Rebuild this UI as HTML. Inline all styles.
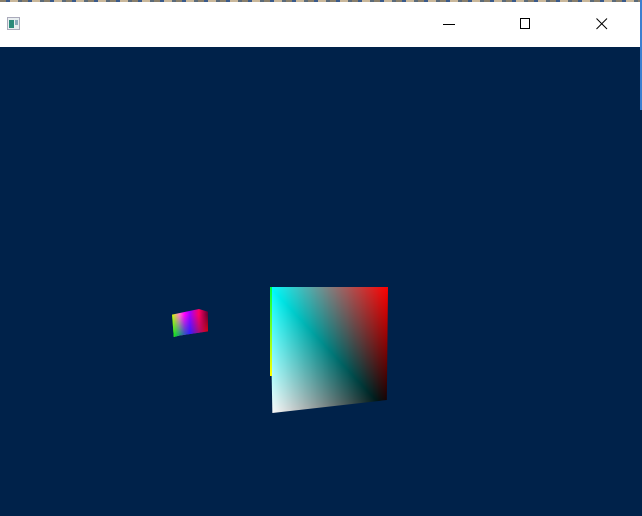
<!DOCTYPE html>
<html><head><style>
html,body{margin:0;padding:0;width:642px;height:516px;overflow:hidden;background:#00224a;font-family:"Liberation Sans",sans-serif;position:relative}
.tb{position:absolute;left:0;top:0;width:640px;height:47px;background:#fff}
.top{position:absolute;left:0;top:0;width:642px;height:2px;background:repeating-linear-gradient(90deg,#8a7f6a 0 6px,#3a5a8a 6px 10px,#c9b79a 10px 18px,#5a6a7a 18px 22px)}
.rb{position:absolute;left:640px;top:0;width:2px;height:110px;background:#3b7fd0}
.q{position:absolute;left:270px;top:287px;width:118px;height:126px;clip-path:polygon(0 0,100% 0,99% 89.7%,2% 100%);background:linear-gradient(to top right,#ff0000,#000 50%,#ff0000),linear-gradient(to right,#00ffff,#000);background-blend-mode:screen}
.strip{position:absolute;left:270px;top:287px;width:2px;height:89px;background:linear-gradient(#00ff40,#ffff00)}
.s{position:absolute;left:172px;top:309px;width:36px;height:28px;clip-path:polygon(0 20%,75% 0,100% 10%,100% 80%,20% 95%,5% 100%);background:linear-gradient(to right,#ccff00,#ff80c0 20%,#ff00ff 35%,#a000ff 50%,#ff0060 75%,#600030)}
.s::after{content:"";position:absolute;inset:0;background:linear-gradient(to right,#00ff00,#2020ff 50%,#ff0000);-webkit-mask-image:linear-gradient(to bottom,transparent,#000);mask-image:linear-gradient(to bottom,transparent 20%,#000)}
</style></head><body>
<div class="tb"></div><div class="top"></div><div class="rb"></div>
<svg style="position:absolute;left:0;top:0" width="642" height="47">
<rect x="7.5" y="17.5" width="12" height="12" fill="#e8eef0" stroke="#aab"/>
<rect x="9" y="20" width="5" height="8" fill="#2a8a7a"/>
<rect x="15" y="20" width="3" height="5" fill="#8ab"/>
<line x1="443" y1="24.5" x2="455" y2="24.5" stroke="#000"/>
<rect x="520.5" y="18.5" width="9" height="10" fill="none" stroke="#000"/>
<path d="M596.5 18.5 L607 29 M607 18.5 L596.5 29" stroke="#000" stroke-width="1"/>
</svg>
<div class="q"></div><div class="strip"></div>
<div class="s"></div>
</body></html>
